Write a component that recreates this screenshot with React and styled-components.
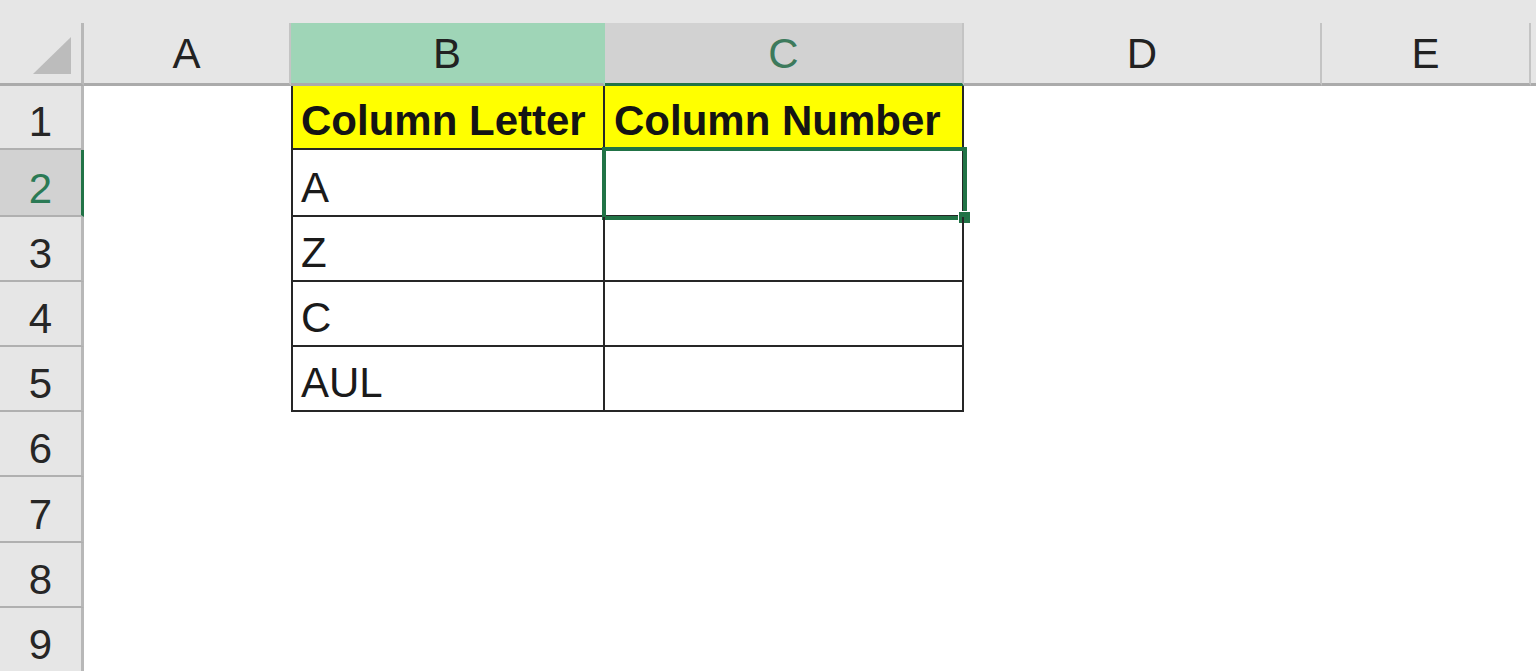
import React from 'react'
import styled, { createGlobalStyle, css } from 'styled-components'

const GlobalStyle = createGlobalStyle`
  html, body {
    margin: 0;
    padding: 0;
    background: #ffffff;
    overflow: hidden;
  }
  body {
    font-family: "Liberation Sans", Arial, sans-serif;
  }
`

const green = '#217346'

const columns = [
  { name: 'A', width: 207 },
  { name: 'B', width: 314, tint: true },
  { name: 'C', width: 359, active: true },
  { name: 'D', width: 358 },
  { name: 'E', width: 209 },
  { name: '', width: null },
]

const rowHeights = [64, 67, 65, 65, 65, 65, 66, 65, 65]

const table = {
  1: ['Column Letter', 'Column Number'],
  2: ['A', ''],
  3: ['Z', ''],
  4: ['C', ''],
  5: ['AUL', ''],
}

const Page = styled.div`
  width: 1536px;
  height: 671px;
  overflow: hidden;
  background: #e6e6e6;
`

const TopBand = styled.div`
  height: 23px;
  background: #e6e6e6;
`

const Sheet = styled.div`
  display: grid;
  grid-template-columns: 84px ${columns.map((c) => (c.width ? `${c.width}px` : '1fr')).join(' ')};
  grid-template-rows: 63px ${rowHeights.map((h) => `${h}px`).join(' ')};
  background: #ffffff;
`

const Corner = styled.div`
  box-sizing: border-box;
  background: #e6e6e6;
  border-right: 3px solid #b8b8b8;
  border-bottom: 3px solid #ababab;
  display: flex;
  align-items: flex-end;
  justify-content: flex-end;
  padding: 0 10px 9px 0;
`

const Triangle = styled.div`
  width: 0;
  height: 0;
  border-left: 38px solid transparent;
  border-bottom: 37px solid #bcbcbc;
`

const ColHead = styled.div`
  box-sizing: border-box;
  background: ${(p) => (p.$tint ? '#9fd5b7' : p.$active ? '#d2d2d2' : '#e6e6e6')};
  border-right: 2px solid ${(p) => (p.$tint ? '#9fd5b7' : '#c4c4c4')};
  border-bottom: 3px solid ${(p) => (p.$active ? green : '#ababab')};
  color: ${(p) => (p.$active ? '#3d7a5c' : '#222222')};
  font-size: 42px;
  line-height: 1;
  display: flex;
  align-items: flex-end;
  justify-content: center;
  padding-bottom: 8px;
`

const RowHead = styled.div`
  box-sizing: border-box;
  background: ${(p) => (p.$active ? '#d2d2d2' : '#e6e6e6')};
  border-right: 3px solid ${(p) => (p.$active ? green : '#b8b8b8')};
  border-bottom: 2px solid #b0b0b0;
  color: ${(p) => (p.$active ? '#2b7a55' : '#262626')};
  font-size: 42px;
  line-height: 1;
  display: flex;
  align-items: flex-end;
  justify-content: center;
  padding-bottom: 5px;
`

const Cell = styled.div`
  box-sizing: border-box;
  position: relative;
  font-size: 42px;
  line-height: 1;
  color: #1a1a1a;
  display: flex;
  align-items: flex-end;
  padding: 0 0 6px 9px;
  white-space: nowrap;
  ${(p) =>
    p.$boxed &&
    css`
      border-right: 2px solid #262626;
      border-bottom: 2px solid #262626;
    `}
  ${(p) =>
    p.$first &&
    css`
      border-left: 2px solid #262626;
      padding-left: 8px;
    `}
  ${(p) =>
    p.$head &&
    css`
      background: #ffff00;
      font-weight: bold;
      color: #141414;
    `}
`

const Selection = styled.div`
  position: absolute;
  left: -3px;
  top: -3px;
  right: -5px;
  bottom: -5px;
  border: 4px solid ${green};
  pointer-events: none;
`

const FillHandle = styled.div`
  position: absolute;
  right: -8px;
  bottom: -8px;
  width: 11px;
  height: 11px;
  background: ${green};
  border: 1px solid #ffffff;
`

export default function App() {
  return (
    <Page>
      <GlobalStyle />
      <TopBand />
      <Sheet>
        <Corner>
          <Triangle />
        </Corner>
        {columns.map((c, i) => (
          <ColHead key={i} $tint={c.tint} $active={c.active}>
            {c.name}
          </ColHead>
        ))}
        {rowHeights.map((_, r) => {
          const row = r + 1
          const data = table[row]
          return (
            <React.Fragment key={row}>
              <RowHead $active={row === 2}>{row}</RowHead>
              {columns.map((c, i) => {
                const inTable = data && (i === 1 || i === 2)
                const text = inTable ? data[i - 1] : ''
                return (
                  <Cell
                    key={i}
                    $boxed={inTable}
                    $first={inTable && i === 1}
                    $head={inTable && row === 1}
                  >
                    {text}
                    {row === 2 && i === 2 && (
                      <Selection>
                        <FillHandle />
                      </Selection>
                    )}
                  </Cell>
                )
              })}
            </React.Fragment>
          )
        })}
      </Sheet>
    </Page>
  )
}
